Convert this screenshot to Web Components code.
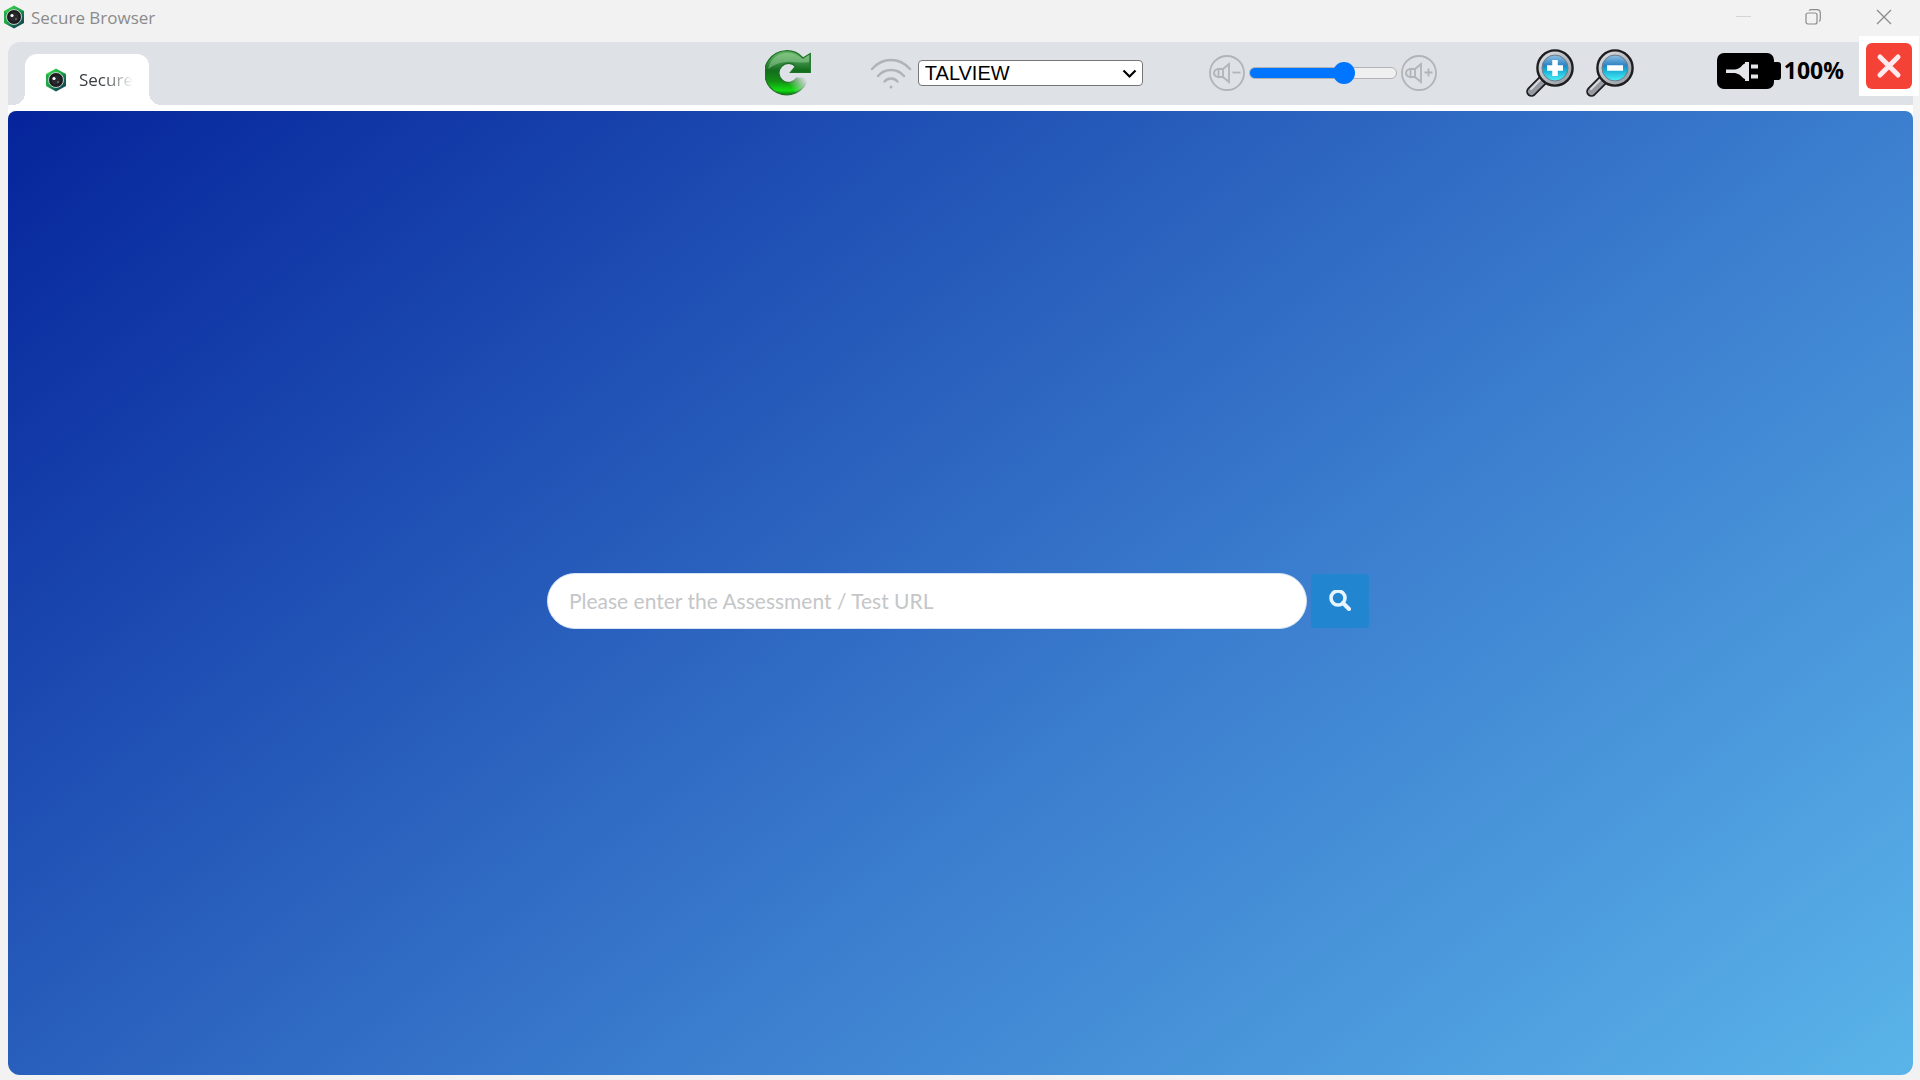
<!DOCTYPE html>
<html lang="en">
<head>
<meta charset="utf-8">
<title>Secure Browser</title>
<style>
  html, body {
    height: 100%;
    margin: 0;
  }
  body {
    background: #f2f2f2;
    font-family: "Open Sans", "Noto Sans", sans-serif;
  }
</style>
</head>
<body>
<browser-window>
  <title-bar slot="title">Secure Browser</title-bar>
  <tool-bar slot="toolbar">
    <browser-tab slot="tab">Secure</browser-tab>
    <refresh-button></refresh-button>
    <network-picker></network-picker>
    <volume-control></volume-control>
    <zoom-controls></zoom-controls>
    <battery-status>100%</battery-status>
    <exit-button slot="exit"></exit-button>
  </tool-bar>
  <start-page></start-page>
</browser-window>

<script>
class BrowserWindow extends HTMLElement {
  connectedCallback() {
    this.attachShadow({ mode: 'open' });
    this.shadowRoot.innerHTML = `
      <style>
        :host {
          display: flex;
          flex-direction: column;
          min-height: 100vh;
          box-sizing: border-box;
          padding: 0 7px 5px 8px;
        }
        main {
          flex: 1;
          display: flex;
          padding-top: 6px;
          background: linear-gradient(white 20px, transparent 20px);
        }
      </style>
      <slot name="title"></slot>
      <slot name="toolbar"></slot>
      <main><slot></slot></main>
    `;
  }
}
customElements.define('browser-window', BrowserWindow);

class AppLogo extends HTMLElement {
  connectedCallback() {
    this.attachShadow({ mode: 'open' });
    this.shadowRoot.innerHTML = `
      <style>
        :host { display: block; flex: none; }
        svg { display: block; }
      </style>
      <svg width="22" height="24" viewBox="0 0 22 24" aria-hidden="true">
        <defs>
          <linearGradient id="hex" x1="0.1" y1="0" x2="0.9" y2="1">
            <stop offset="0" stop-color="#3edb4e"/>
            <stop offset="0.45" stop-color="#1fa548"/>
            <stop offset="0.75" stop-color="#125a52"/>
            <stop offset="1" stop-color="#18404c"/>
          </linearGradient>
        </defs>
        <path d="M11 .5 21 6v12l-10 5.500L1 18V6z" fill="url(#hex)"/>
        <path d="M1 18V6l3 2v8z" fill="#22a844"/>
        <circle cx="11" cy="12" r="7.500" fill="#1d1d20" stroke="#cfdcd8" stroke-width="0.900"/>
        <circle cx="11" cy="12" r="4.500" fill="#29292e"/>
        <circle cx="9" cy="10.500" r="1.600" fill="#fff"/>
        <circle cx="13" cy="14" r="0.700" fill="#bbb"/>
      </svg>
    `;
  }
}
customElements.define('app-logo', AppLogo);

class TitleBar extends HTMLElement {
  connectedCallback() {
    this.attachShadow({ mode: 'open' });
    this.shadowRoot.innerHTML = `
      <style>
        :host {
          display: flex;
          align-items: flex-start;
          height: 42px;
          margin-left: -5px;
          color: #8b8b8b;
          font-size: 17px;
        }
        app-logo { margin-top: 5px; }
        .title {
          flex: 1;
          margin-left: 6px;
          line-height: 36px;
        }
        .window-buttons { display: flex; }
        button {
          width: 70px;
          height: 33px;
          padding: 0;
          border: 0;
          background: none;
          color: #8b8b8b;
        }
        button:last-child {
          width: 58px;
          margin-left: 7px;
        }
        svg { display: block; margin: auto; }
      </style>
      <app-logo></app-logo>
      <div class="title"><slot></slot></div>
      <div class="window-buttons">
        <button type="button" aria-label="Minimize">
          <svg width="16" height="16" viewBox="0 0 16 16"><path d="M1 7.500h15" stroke="#d5d5d5"/></svg>
        </button>
        <button type="button" aria-label="Restore">
          <svg width="16" height="16" viewBox="0 0 16 16" fill="none" stroke="currentColor" stroke-width="1.200">
            <rect x="1" y="4" width="11" height="11" rx="2"/>
            <path d="M4 1.500Q5 .7 6 .7h6Q15.300 .7 15.300 4v6q0 1.500-1 2.500"/>
          </svg>
        </button>
        <button type="button" aria-label="Close">
          <svg width="16" height="16" viewBox="0 0 16 16"><path d="m1 1 14 14M15 1 1 15" stroke="currentColor" stroke-width="1.300"/></svg>
        </button>
      </div>
    `;
  }
}
customElements.define('title-bar', TitleBar);

class ToolBar extends HTMLElement {
  connectedCallback() {
    this.attachShadow({ mode: 'open' });
    this.shadowRoot.innerHTML = `
      <style>
        :host {
          display: flex;
          align-items: center;
          height: 63px;
          padding-left: 17px;
          border-top-left-radius: 12px;
          background: #dee1e6;
        }
        .controls {
          flex: 1;
          display: flex;
          align-items: center;
          justify-content: flex-end;
          padding-bottom: 2px;
        }
      </style>
      <slot name="tab"></slot>
      <div class="controls"><slot></slot></div>
      <slot name="exit"></slot>
    `;
  }
}
customElements.define('tool-bar', ToolBar);

class BrowserTab extends HTMLElement {
  connectedCallback() {
    this.attachShadow({ mode: 'open' });
    this.shadowRoot.innerHTML = `
      <style>
        :host {
          position: relative;
          display: flex;
          align-items: center;
          align-self: flex-end;
          box-sizing: border-box;
          width: 124px;
          height: 51px;
          padding: 0 16px 0 20px;
          border-radius: 12px 12px 0 0;
          background: #fff;
          color: #3c4043;
          font-size: 17px;
        }
        /* curved feet of the tab */
        :host::before, :host::after {
          content: "";
          position: absolute;
          bottom: 0;
          width: 12px;
          height: 12px;
        }
        :host::before {
          right: 100%;
          background: radial-gradient(circle at 0 0, transparent 12px, #fff 12px);
        }
        :host::after {
          left: 100%;
          background: radial-gradient(circle at 100% 0, transparent 12px, #fff 12px);
        }
        .label {
          flex: 1;
          margin-left: 12px;
          white-space: nowrap;
          -webkit-mask-image: linear-gradient(to right, #000 45%, transparent);
          mask-image: linear-gradient(to right, #000 45%, transparent);
        }
      </style>
      <app-logo></app-logo>
      <div class="label"><slot></slot></div>
    `;
  }
}
customElements.define('browser-tab', BrowserTab);

class RefreshButton extends HTMLElement {
  connectedCallback() {
    this.attachShadow({ mode: 'open' });
    this.shadowRoot.innerHTML = `
      <style>
        :host { display: block; }
        button { display: block; padding: 0; border: 0; background: none; }
        svg { display: block; }
      </style>
      <button type="button" aria-label="Reload">
        <svg width="46" height="46" viewBox="0 0 46 46">
          <defs>
            <linearGradient id="g" x1="0" y1="0" x2="0" y2="1">
              <stop offset="0" stop-color="#63b863"/>
              <stop offset="0.250" stop-color="#3f9148"/>
              <stop offset="0.450" stop-color="#126d1c"/>
              <stop offset="0.700" stop-color="#149014"/>
              <stop offset="0.900" stop-color="#12dc12"/>
              <stop offset="1" stop-color="#0b7a10"/>
            </linearGradient>
            <linearGradient id="fade" gradientUnits="userSpaceOnUse" x1="26" y1="38" x2="40" y2="28">
              <stop offset="0" stop-color="#fff"/>
              <stop offset="1" stop-color="#fff" stop-opacity="0"/>
            </linearGradient>
            <mask id="m" maskUnits="userSpaceOnUse" x="0" y="0" width="46" height="46">
              <path d="M0 0h46v25H0z" fill="#fff"/>
              <path d="M0 25h46v21H0z" fill="url(#fade)"/>
            </mask>
          </defs>
          <g mask="url(#m)">
            <path d="M38 8 45.300 3.500V22.500H25.500L30.500 16.500A9.500 9.500 0 1 0 31.500 28L43 28A22 22 0 1 1 38 8z" fill="url(#g)" stroke="#1d7226" stroke-width="1.200"/>
            <path d="M3 19Q7 3 23 3q8 0 15 6l6-4v7q-8 1-15 0-14-2-26 7z" fill="#c4ecbf" opacity="0.350"/>
          </g>
        </svg>
      </button>
    `;
  }
}
customElements.define('refresh-button', RefreshButton);

class NetworkPicker extends HTMLElement {
  connectedCallback() {
    this.attachShadow({ mode: 'open' });
    this.shadowRoot.innerHTML = `
      <style>
        :host {
          display: flex;
          align-items: center;
          gap: 6px;
          margin-left: 59px;
        }
        svg { display: block; }
        .field {
          position: relative;
          display: flex;
        }
        select {
          -webkit-appearance: none;
          appearance: none;
          width: 225px;
          height: 26px;
          padding: 0 6px;
          border: 1px solid #767676;
          border-radius: 4px;
          background-color: #fff;
          color: #000;
          font: 20px/24px "Liberation Sans", Arial, sans-serif;
        }
        .arrow {
          position: absolute;
          top: 9px;
          right: 6px;
          pointer-events: none;
        }
      </style>
      <svg width="42" height="34" viewBox="0 0 42 34" fill="none" stroke="#b0b3b8" stroke-width="2.400" stroke-linecap="round" aria-hidden="true">
        <path d="M2 13Q10 4 21 4t19 9M8 20Q13 14 21 14t13 6M14.500 25.500Q17 22.500 21 22.500t6.500 3"/>
        <circle cx="21" cy="31" r="1.500" fill="#b0b3b8" stroke="none"/>
      </svg>
      <div class="field">
        <select aria-label="Network">
          <option>TALVIEW</option>
        </select>
        <svg class="arrow" width="15" height="10" viewBox="0 0 15 10" fill="none" stroke="#000" stroke-width="2.200" aria-hidden="true">
          <path d="m1.500 1.500 6 6 6-6"/>
        </svg>
      </div>
    `;
  }
}
customElements.define('network-picker', NetworkPicker);

class VolumeControl extends HTMLElement {
  connectedCallback() {
    this.attachShadow({ mode: 'open' });
    const icon = sign => `
      <svg width="36" height="36" viewBox="0 0 36 36" fill="none" stroke="#b1b4b8" stroke-width="1.800">
        <circle cx="18" cy="18" r="17"/>
        <path d="M14 14H8.500Q5 15 5 18t3.500 4H14zM9.500 14v8M14 14l6-5v18l-6-5"/>
        <path d="${sign}"/>
      </svg>`;
    this.shadowRoot.innerHTML = `
      <style>
        :host {
          display: flex;
          align-items: center;
          gap: 4px;
          margin-left: 66px;
        }
        button { padding: 0; border: 0; background: none; }
        svg { display: block; }
        input {
          -webkit-appearance: none;
          appearance: none;
          width: 148px;
          height: 22px;
          margin: 0;
          background: none;
        }
        input::-webkit-slider-runnable-track {
          box-sizing: border-box;
          height: 12px;
          border: 1px solid #b2b2b2;
          border-radius: 6px;
          background: linear-gradient(to right, #0075ff 64%, #efefef 64%) border-box;
        }
        input::-webkit-slider-thumb {
          -webkit-appearance: none;
          width: 22px;
          height: 22px;
          margin-top: -6px;
          border-radius: 50%;
          background: #0075ff;
        }
      </style>
      <button type="button" aria-label="Volume down">${icon('M23.500 17.500h8')}</button>
      <input type="range" min="0" max="100" value="67" aria-label="Volume">
      <button type="button" aria-label="Volume up">${icon('M23.500 17.500h8M27.500 13.500v8')}</button>
    `;
  }
}
customElements.define('volume-control', VolumeControl);

class ZoomControls extends HTMLElement {
  connectedCallback() {
    this.attachShadow({ mode: 'open' });
    const icon = sign => `
      <svg width="48" height="48" viewBox="0 0 48 48">
        <defs>
          <linearGradient id="lens" x1="0" y1="0" x2="0" y2="1">
            <stop offset="0" stop-color="#8fc0e4"/>
            <stop offset="0.400" stop-color="#2c83c4"/>
            <stop offset="0.500" stop-color="#0fa0d0"/>
            <stop offset="1" stop-color="#4bf0f6"/>
          </linearGradient>
          <linearGradient id="ring" x1="0" y1="0" x2="1" y2="1">
            <stop offset="0" stop-color="#e2e4e7"/>
            <stop offset="1" stop-color="#8f959d"/>
          </linearGradient>
        </defs>
        <path d="M17 31 5.500 42.500" stroke="#1e1e20" stroke-width="10.500" stroke-linecap="round"/>
        <path d="M17 31 5.500 42.500" stroke="#9499a2" stroke-width="7" stroke-linecap="round"/>
        <path d="M15 30 5 40" stroke="#d9dbe0" stroke-width="2" stroke-linecap="round"/>
        <circle cx="29" cy="19" r="17.600" fill="url(#ring)" stroke="#1e1e20" stroke-width="2.400"/>
        <circle cx="29" cy="19" r="13" fill="url(#lens)" stroke="#707b86"/>
        <path d="${sign}" stroke="#fff" stroke-width="5.500"/>
      </svg>`;
    this.shadowRoot.innerHTML = `
      <style>
        :host {
          display: flex;
          gap: 12px;
          margin-left: 89px;
        }
        button { padding: 0; border: 0; background: none; }
        svg { display: block; }
      </style>
      <button type="button" aria-label="Zoom in">${icon('M21 19h16M29 11v16')}</button>
      <button type="button" aria-label="Zoom out">${icon('M21 19h16')}</button>
    `;
  }
}
customElements.define('zoom-controls', ZoomControls);

class BatteryStatus extends HTMLElement {
  connectedCallback() {
    this.attachShadow({ mode: 'open' });
    this.shadowRoot.innerHTML = `
      <style>
        :host {
          display: flex;
          align-items: flex-end;
          gap: 3px;
          margin: 0 15px 6px 83px;
          color: #000;
          font-size: 23px;
          font-weight: 700;
          line-height: 38px;
        }
        svg { display: block; }
      </style>
      <svg width="64" height="36" viewBox="0 0 64 36" aria-hidden="true">
        <rect width="57" height="36" rx="7"/>
        <rect x="52" y="9" width="12" height="18" rx="3"/>
        <path d="M9 16.500h9q5-1 7-4 2-2 3-2V9h4v19h-4v-2q-1 0-3-2-2-3-7-4H9zM34 11.500h7v4h-7zM34 21.500h7v4h-7z" fill="#e4e6ea"/>
      </svg>
      <span><slot></slot></span>
    `;
  }
}
customElements.define('battery-status', BatteryStatus);

class ExitButton extends HTMLElement {
  connectedCallback() {
    this.attachShadow({ mode: 'open' });
    this.shadowRoot.innerHTML = `
      <style>
        :host {
          display: block;
          align-self: flex-start;
          margin: -6px -6px 0 0;
          padding: 7px;
          background: #fff;
        }
        button {
          display: block;
          width: 46px;
          height: 46px;
          padding: 0;
          border: 0;
          border-radius: 6px;
          background: #f44336;
        }
        svg { display: block; margin: auto; }
      </style>
      <button type="button" aria-label="Exit">
        <svg width="46" height="46" viewBox="0 0 46 46"><path d="m14 14 18 18M32 14 14 32" stroke="#ffebee" stroke-width="5" stroke-linecap="round"/></svg>
      </button>
    `;
  }
}
customElements.define('exit-button', ExitButton);

class StartPage extends HTMLElement {
  connectedCallback() {
    this.attachShadow({ mode: 'open' });
    this.shadowRoot.innerHTML = `
      <style>
        :host {
          flex: 1;
          display: flex;
          align-items: center;
          justify-content: center;
          padding: 16px 5px 0 0;
          border-radius: 8px 8px 12px 12px;
          background: linear-gradient(142deg, #05249b, #3c7fcf 61%, #5ab4e9);
        }
        form {
          flex: 1;
          display: flex;
          align-items: center;
          justify-content: center;
          gap: 4px;
        }
        input {
          box-sizing: border-box;
          width: 40%;
          height: 56px;
          padding: 0 21px 2px;
          border: 1px solid #d4e2f4;
          border-radius: 28px;
          background: #fff;
          color: #333;
          font: 21px Lato, sans-serif;
        }
        input::placeholder { color: #c4c6c8; }
        button {
          width: 58px;
          height: 54px;
          padding: 0;
          border: 0;
          border-radius: 4px;
          background: #2185d0;
        }
        svg { display: block; margin: auto; }
      </style>
      <form>
        <input type="text" placeholder="Please enter the Assessment / Test URL" aria-label="Assessment / Test URL">
        <button type="button" aria-label="Open">
          <svg width="22" height="22" viewBox="0 0 22 22" fill="none" stroke="#e6f5ff">
            <circle cx="9" cy="8" r="7" stroke-width="3.600"/>
            <path d="m14 13 6 6" stroke-width="4" stroke-linecap="round"/>
          </svg>
        </button>
      </form>
    `;
  }
}
customElements.define('start-page', StartPage);
</script>
</body>
</html>
